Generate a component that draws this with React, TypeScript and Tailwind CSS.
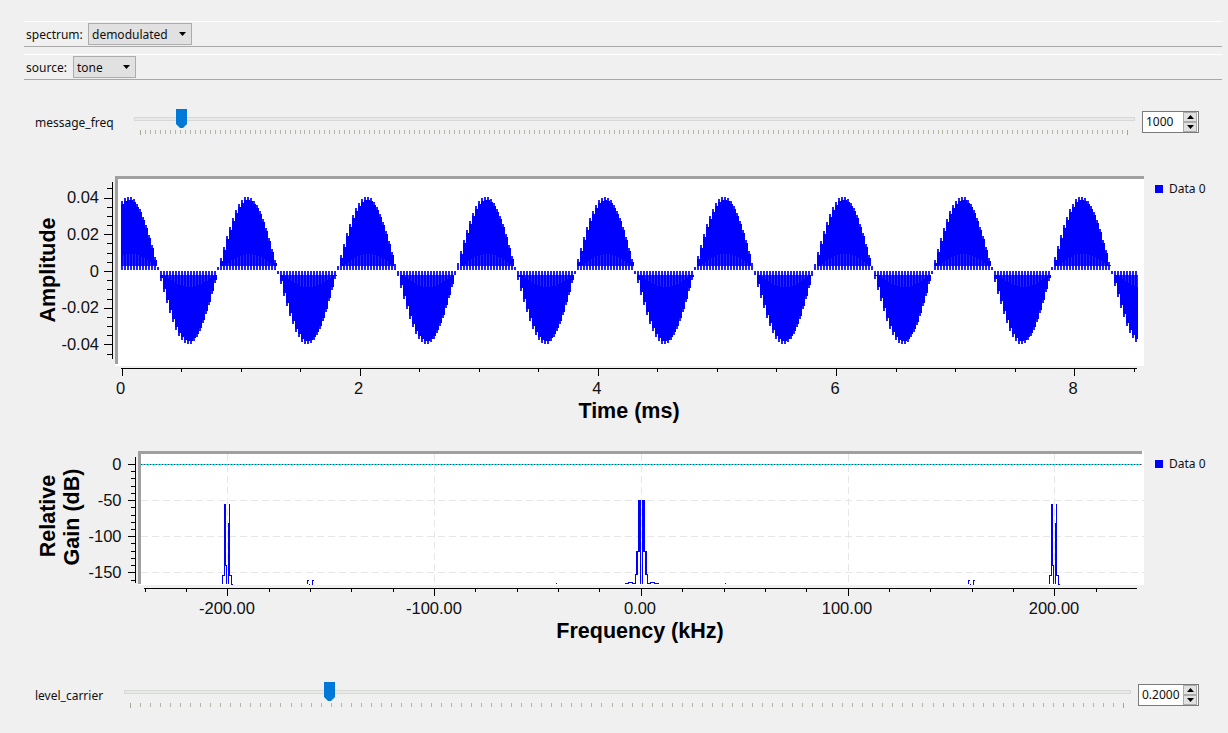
import React from "react";

const BLUE = "#0000ff";
const UI = "font-['Noto_Sans',sans-serif] text-[12px] text-[#101010]";

function Arrow({ up = false }: { up?: boolean }) {
  return (
    <svg width="7" height="4" viewBox="0 0 7 4" className="block">
      <path d={up ? "M0 4L3.5 0L7 4Z" : "M0 0H7L3.5 4Z"} fill="#000" />
    </svg>
  );
}

function Combo({ text, w }: { text: string; w: string }) {
  return (
    <div className={`flex h-[22px] items-center justify-between border border-[#acacac] bg-[#e1e1e1] pl-[3px] pr-[5px] ${w}`}>
      <span className="pt-px">{text}</span>
      <Arrow />
    </div>
  );
}

function Group({ label, labelW, children, top }: { label: string; labelW: string; children: React.ReactNode; top: string }) {
  return (
    <div className={`ml-6 mr-[6px] flex h-[26px] items-start gap-[4px] border-t border-b border-t-white border-b-[#a8a8a8] pl-[2px] pt-px ${UI} ${top}`}>
      <span className={`self-center pt-px ${labelW}`}>{label}</span>
      {children}
    </div>
  );
}

function Spin({ value, w }: { value: string; w: string }) {
  return (
    <div className={`flex h-[22px] items-center justify-between border border-[#7a7a7a] bg-white pl-[3px] pr-px ${UI} ${w}`}>
      <span>{value}</span>
      <div className="flex w-[14px] flex-col gap-0">
        <div className="flex h-[10px] items-center justify-center border border-[#acacac] bg-[#e1e1e1]"><Arrow up /></div>
        <div className="flex h-[10px] items-center justify-center border border-[#acacac] bg-[#e1e1e1]"><Arrow /></div>
      </div>
    </div>
  );
}

function Slider({ label, labelW, sliderW, thumb, ticks, pad, value, spinW, spinMl, top }: {
  label: string; labelW: string; sliderW: string; thumb: string; ticks: number; pad: string; value: string; spinW: string; spinMl: string; top: string;
}) {
  return (
    <div className={`flex h-[28px] items-center ${top}`}>
      <div className={`pl-[35px] pt-[2px] ${labelW} ${UI}`}>{label}</div>
      <div className={`relative h-[28px] ${sliderW}`}>
        <div className="mt-[9px] h-[4px] border border-[#d6d9d6] bg-[#e7eae7]" />
        <div className={`mt-[9px] flex items-start justify-between ${pad}`}>
          {Array.from({ length: ticks }, (_, i) => (
            <div key={i} className={i === 0 || i === ticks - 1 ? "h-[5px] w-px bg-[#a5a595]" : "h-[4px] w-px bg-[#b4b4a8]"} />
          ))}
        </div>
        <svg width="11" height="19" viewBox="0 0 11 19" className={`absolute top-px ${thumb}`}>
          <path d="M0 0H11V15L8 18L7 19H4L3 18L0 15Z" fill="#0078d7" />
        </svg>
      </div>
      <div className={spinMl}>
        <Spin value={value} w={spinW} />
      </div>
    </div>
  );
}

function Legend({ pt }: { pt: string }) {
  return (
    <div className={`ml-[10px] flex items-center gap-[6px] self-start ${pt} ${UI}`}>
      <div className="h-[8px] w-[8px] bg-[#0000ff]" />
      <span>Data 0</span>
    </div>
  );
}

function waveform() {
  const zero = 218;
  const period = 119.08;
  const env = (xx: number) => 0.04 * Math.sin(((xx - zero) / period) * 2 * Math.PI);
  let crown = "";
  let solid = "";
  let gapLight = "";
  for (let x = 121; x < 1137; x += 3) {
    const v = env(x + 1);
    const pos = v >= 0;
    const base = pos ? 270 : 271;
    const sign = pos ? 1 : -1;
    const h = Math.abs(v) * 1835;
    const top = Math.round(base - sign * Math.max(h, 3));
    // the 2px bar: reaches the centre line and the envelope
    crown += `M${x} ${base}H${x + 2}V${top}H${x}Z`;
    if (h > 4) {
      // solid core: from the comb at the base to just under the crown at the envelope
      const b = base - sign * 4;
      const t = Math.round(base - sign * Math.max(h - 3, 4));
      if (t !== b) solid += `M${x} ${b}H${x + 3}V${t}H${x}Z`;
      // lighter arc in the gaps just above the comb
      const a = Math.round(base - sign * Math.max(h * 0.22, 4));
      if (a !== b) gapLight += `M${x + 2} ${b}H${x + 3}V${a}H${x + 2}Z`;
    }
  }
  return { crown, solid, gapLight };
}

function Plot1() {
  const { crown, solid, gapLight } = waveform();
  const yT: React.ReactNode[] = [];
  for (let i = -10; i <= 10; i++) {
    const yy = 271 - i * 9.18;
    if (yy < 183 || yy > 358) continue;
    const major = i % 4 === 0 && Math.abs(i) <= 8;
    yT.push(<path key={i} d={`M${major ? 104 : 107} ${Math.round(yy) + 0.5}H113`} stroke="#000" />);
  }
  const xT: React.ReactNode[] = [];
  for (let i = 0; i <= 17; i++) {
    const xx = Math.round(121.5 + i * 59.54) + 0.5;
    const major = i % 4 === 0;
    xT.push(<path key={i} d={`M${xx} 368V${major ? 376 : 372}`} stroke="#000" />);
  }
  const yLabels: [string, number][] = [["0.04", 197], ["0.02", 234], ["0", 271], ["-0.02", 307], ["-0.04", 344]];
  return (
    <svg width="1145" height="250" viewBox="0 176 1145 250" className="block shrink-0 font-['Liberation_Sans',sans-serif]">
      <rect x="115" y="176" width="1029" height="190" fill="#fff" />
      <path d="M1144 177.5H116.5V364" fill="none" stroke="#a0a0a0" strokeWidth="3" />
      <g shapeRendering="crispEdges">
        <path d={crown} fill="#2020ff" />
        <path d={solid} fill={BLUE} />
        <path d={gapLight} fill="#2a2aff" />
        <path d="M112.5 182V359" stroke="#000" />
        {yT}
        <path d="M121 368.5H1137" stroke="#000" />
        {xT}
      </g>
      {yLabels.map(([t, yy]) => (
        <text key={t} x="99" y={yy + 6} textAnchor="end" fontSize="16.5" fill="#111">{t}</text>
      ))}
      {[0, 2, 4, 6, 8].map((n) => (
        <text key={n} x={120.5 + n * 119.08} y="394" textAnchor="middle" fontSize="16.5" fill="#111">{n}</text>
      ))}
      <text x="629" y="418" textAnchor="middle" fontSize="21.5" fontWeight="700" fill="#000">Time (ms)</text>
      <text transform="translate(55 270) rotate(-90)" textAnchor="middle" fontSize="21.5" fontWeight="700" fill="#000">Amplitude</text>
    </svg>
  );
}

function mirror(cx: number, pts: [number, number][]) {
  const left = pts.map(([d, y]) => `${cx + d} ${y}`);
  const right = [...pts].reverse().map(([d, y]) => `${cx - d} ${y}`);
  return `M${left.join("L")}M${right.join("L")}`;
}

function Plot2() {
  const xs = [-200, -100, 0, 100, 200].map((k) => Math.round(640.8 + k * 2.0675) + 0.5);
  const yT: React.ReactNode[] = [];
  for (let db = 10; db >= -160; db -= 10) {
    const yy = 464 - db * 0.7227;
    if (yy < 457 || yy > 583) continue;
    const major = db % 50 === 0;
    yT.push(<path key={db} d={`M${major ? 128 : 131} ${Math.round(yy) + 0.5}H136`} stroke="#000" />);
  }
  const xT: React.ReactNode[] = [];
  for (let k = -240; k <= 240; k += 20) {
    const xx = Math.round(640.8 + k * 2.0675) + 0.5;
    if (xx < 144 || xx > 1137) continue;
    xT.push(<path key={k} d={`M${xx} 588V${k % 100 === 0 ? 596 : 592}`} stroke="#000" />);
  }
  const side = (cx: number) => [
    `M${cx - 5} 584V575.5H${cx - 3}V504.5H${cx - 2}V565H${cx - 1}V584`,
    `M${cx - 3} 504V565`,
    `M${cx + 1} 584V523H${cx + 2}V504`,
    `M${cx + 2} 523V575.5H${cx + 4}V584H${cx + 5}`,
    `M${cx + 1} 523V566`,
  ].join("");
  const center = 641.5;
  const c = mirror(center, [
    [-17, 583.5], [-13, 583.5], [-13, 582.5], [-9, 582.5], [-9, 583.5], [-6, 583.5], [-6, 574.5], [-5, 574.5], [-5, 551.5], [-3, 551.5], [-3, 500.5], [-1, 500.5], [-1, 551.5], [-1, 583.5],
  ]);
  const thick = `M${center - 2} 501V552M${center + 2} 501V552M${center - 4} 552V575M${center + 4} 552V575M${center - 1} 552V583M${center + 1} 552V583`;
  return (
    <svg width="1145" height="194" viewBox="0 451 1145 194" className="block shrink-0 font-['Liberation_Sans',sans-serif]">
      <rect x="138" y="451" width="1006" height="134" fill="#fff" />
      <path d="M1142 452.5H139.5V584" fill="none" stroke="#a0a0a0" strokeWidth="3" />
      <g shapeRendering="crispEdges">
        {[500.5, 536.5, 572.5].map((y) => (
          <path key={y} d={`M141 ${y}H1144`} stroke="#e6e6e6" strokeDasharray="7 4" />
        ))}
        {xs.map((x) => (
          <path key={x} d={`M${x} 454V585`} stroke="#e6e6e6" strokeDasharray="7 4" />
        ))}
        <path d="M141 464.5H1142" stroke="#00e8e8" />
        <path d="M141 464.5H1142" stroke="#7a2040" strokeDasharray="1 2" />
        <path d={side(227.5)} fill="none" stroke={BLUE} />
        <path d={side(1054.5)} fill="none" stroke={BLUE} />
        <path d={c} fill="none" stroke={BLUE} />
        <path d={thick} fill="none" stroke={BLUE} />
        <path d="M307.5 584V580.5H308.5M308.5 584H309.5M312.5 584V580.5H313.5M311.5 584H312.5" fill="none" stroke={BLUE} />
        <path d="M968.5 584V580.5H969.5M969.5 584H970.5M973.5 584V580.5H974.5M972.5 584H973.5" fill="none" stroke={BLUE} />
        <path d="M556 583.5H557M725 583.5H726" stroke={BLUE} />
        <path d="M135.5 457V583" stroke="#000" />
        {yT}
        <path d="M144 588.5H1137" stroke="#000" />
        {xT}
      </g>
      {[["0", 464], ["-50", 500], ["-100", 536], ["-150", 572]].map(([t, yy]) => (
        <text key={t} x="121.5" y={Number(yy) + 6} textAnchor="end" fontSize="16.5" fill="#111">{t}</text>
      ))}
      {[["-200.00", 227], ["-100.00", 434], ["0.00", 640], ["100.00", 847], ["200.00", 1054]].map(([t, xx]) => (
        <text key={t} x={xx} y="614" textAnchor="middle" fontSize="16.5" fill="#111">{t}</text>
      ))}
      <text x="640" y="638" textAnchor="middle" fontSize="21.5" fontWeight="700" fill="#000">Frequency (kHz)</text>
      <text transform="translate(55 516) rotate(-90)" textAnchor="middle" fontSize="21.5" fontWeight="700" fill="#000">Relative</text>
      <text transform="translate(79 517) rotate(-90)" textAnchor="middle" fontSize="21.5" fontWeight="700" fill="#000">Gain (dB)</text>
    </svg>
  );
}

export default function App() {
  return (
    <div className="flex h-[733px] w-[1228px] flex-col overflow-hidden bg-[#f0f0f0] pt-[21px]">
      <Group label="spectrum:" labelW="w-[58px]" top="">
        <Combo text="demodulated" w="w-[104px]" />
      </Group>
      <Group label="source:" labelW="w-[43px]" top="mt-[7px]">
        <Combo text="tone" w="w-[63px]" />
      </Group>
      <Slider label="message_freq" labelW="w-[134px]" sliderW="w-[1001px]" thumb="left-[42px]" ticks={199} pad="px-[6px]" value="1000" spinW="w-[57px]" spinMl="ml-[7px]" top="mt-[28px]" />
      <div className="mt-[40px] flex">
        <Plot1 />
        <Legend pt="pt-[4px]" />
      </div>
      <div className="mt-[25px] flex">
        <Plot2 />
        <Legend pt="pt-[4px]" />
      </div>
      <Slider label="level_carrier" labelW="w-[124px]" sliderW="w-[1007px]" thumb="left-[200px]" ticks={100} pad="px-[6px]" value="0.2000" spinW="w-[61px]" spinMl="ml-[7px]" top="mt-[36px]" />
    </div>
  );
}
